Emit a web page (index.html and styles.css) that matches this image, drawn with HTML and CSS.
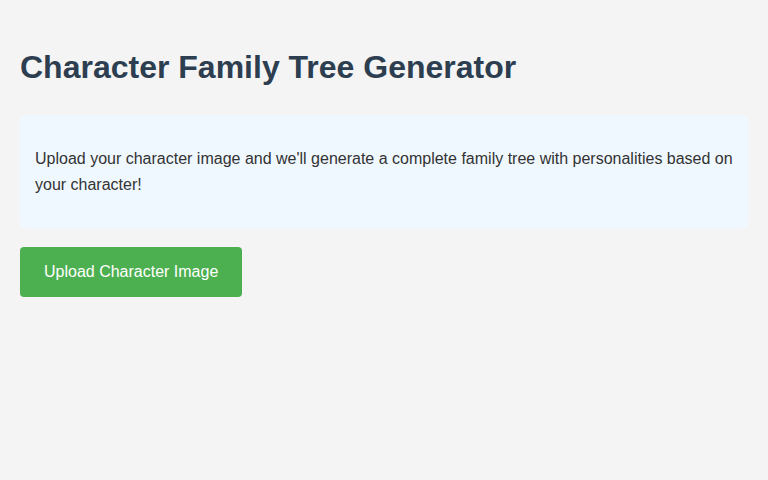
FILE: index.html
```html
<!DOCTYPE html>
<html>
	<head>
		<meta charset="utf-8">
		<title>Character Family Tree Generator</title>
		<link rel="stylesheet" href="styles.css">
	</head>
	<body>
		<h1>Character Family Tree Generator</h1>
		<div class="intro">
			<p>Upload your character image and we'll generate a complete family tree with personalities based on your character!</p>
		</div>
		<button type="button" class="upload">Upload Character Image</button>
	</body>
</html>
```

FILE: styles.css
```css
*{
	box-sizing: border-box;
}
body{
	margin: 0;
	padding: 20px;
	background-color: #f4f4f4;
	font-family: "Liberation Sans", Arial, sans-serif;
	color: #333;
}
h1{
	margin: 29px 0 29px;
	font-size: 32px;
	color: #2c3e50;
}
.intro{
	padding: 15px;
	background-color: #f0f8ff;
	border-radius: 5px;
}
.intro p{
	margin: 16px 0;
	font-size: 16px;
	line-height: 1.6;
}
.upload{
	display: block;
	margin-top: 19px;
	padding: 16px 24px;
	border: none;
	border-radius: 4px;
	background-color: #4caf50;
	color: #fff;
	font-family: "Liberation Sans", Arial, sans-serif;
	font-size: 16px;
	cursor: pointer;
}
```
